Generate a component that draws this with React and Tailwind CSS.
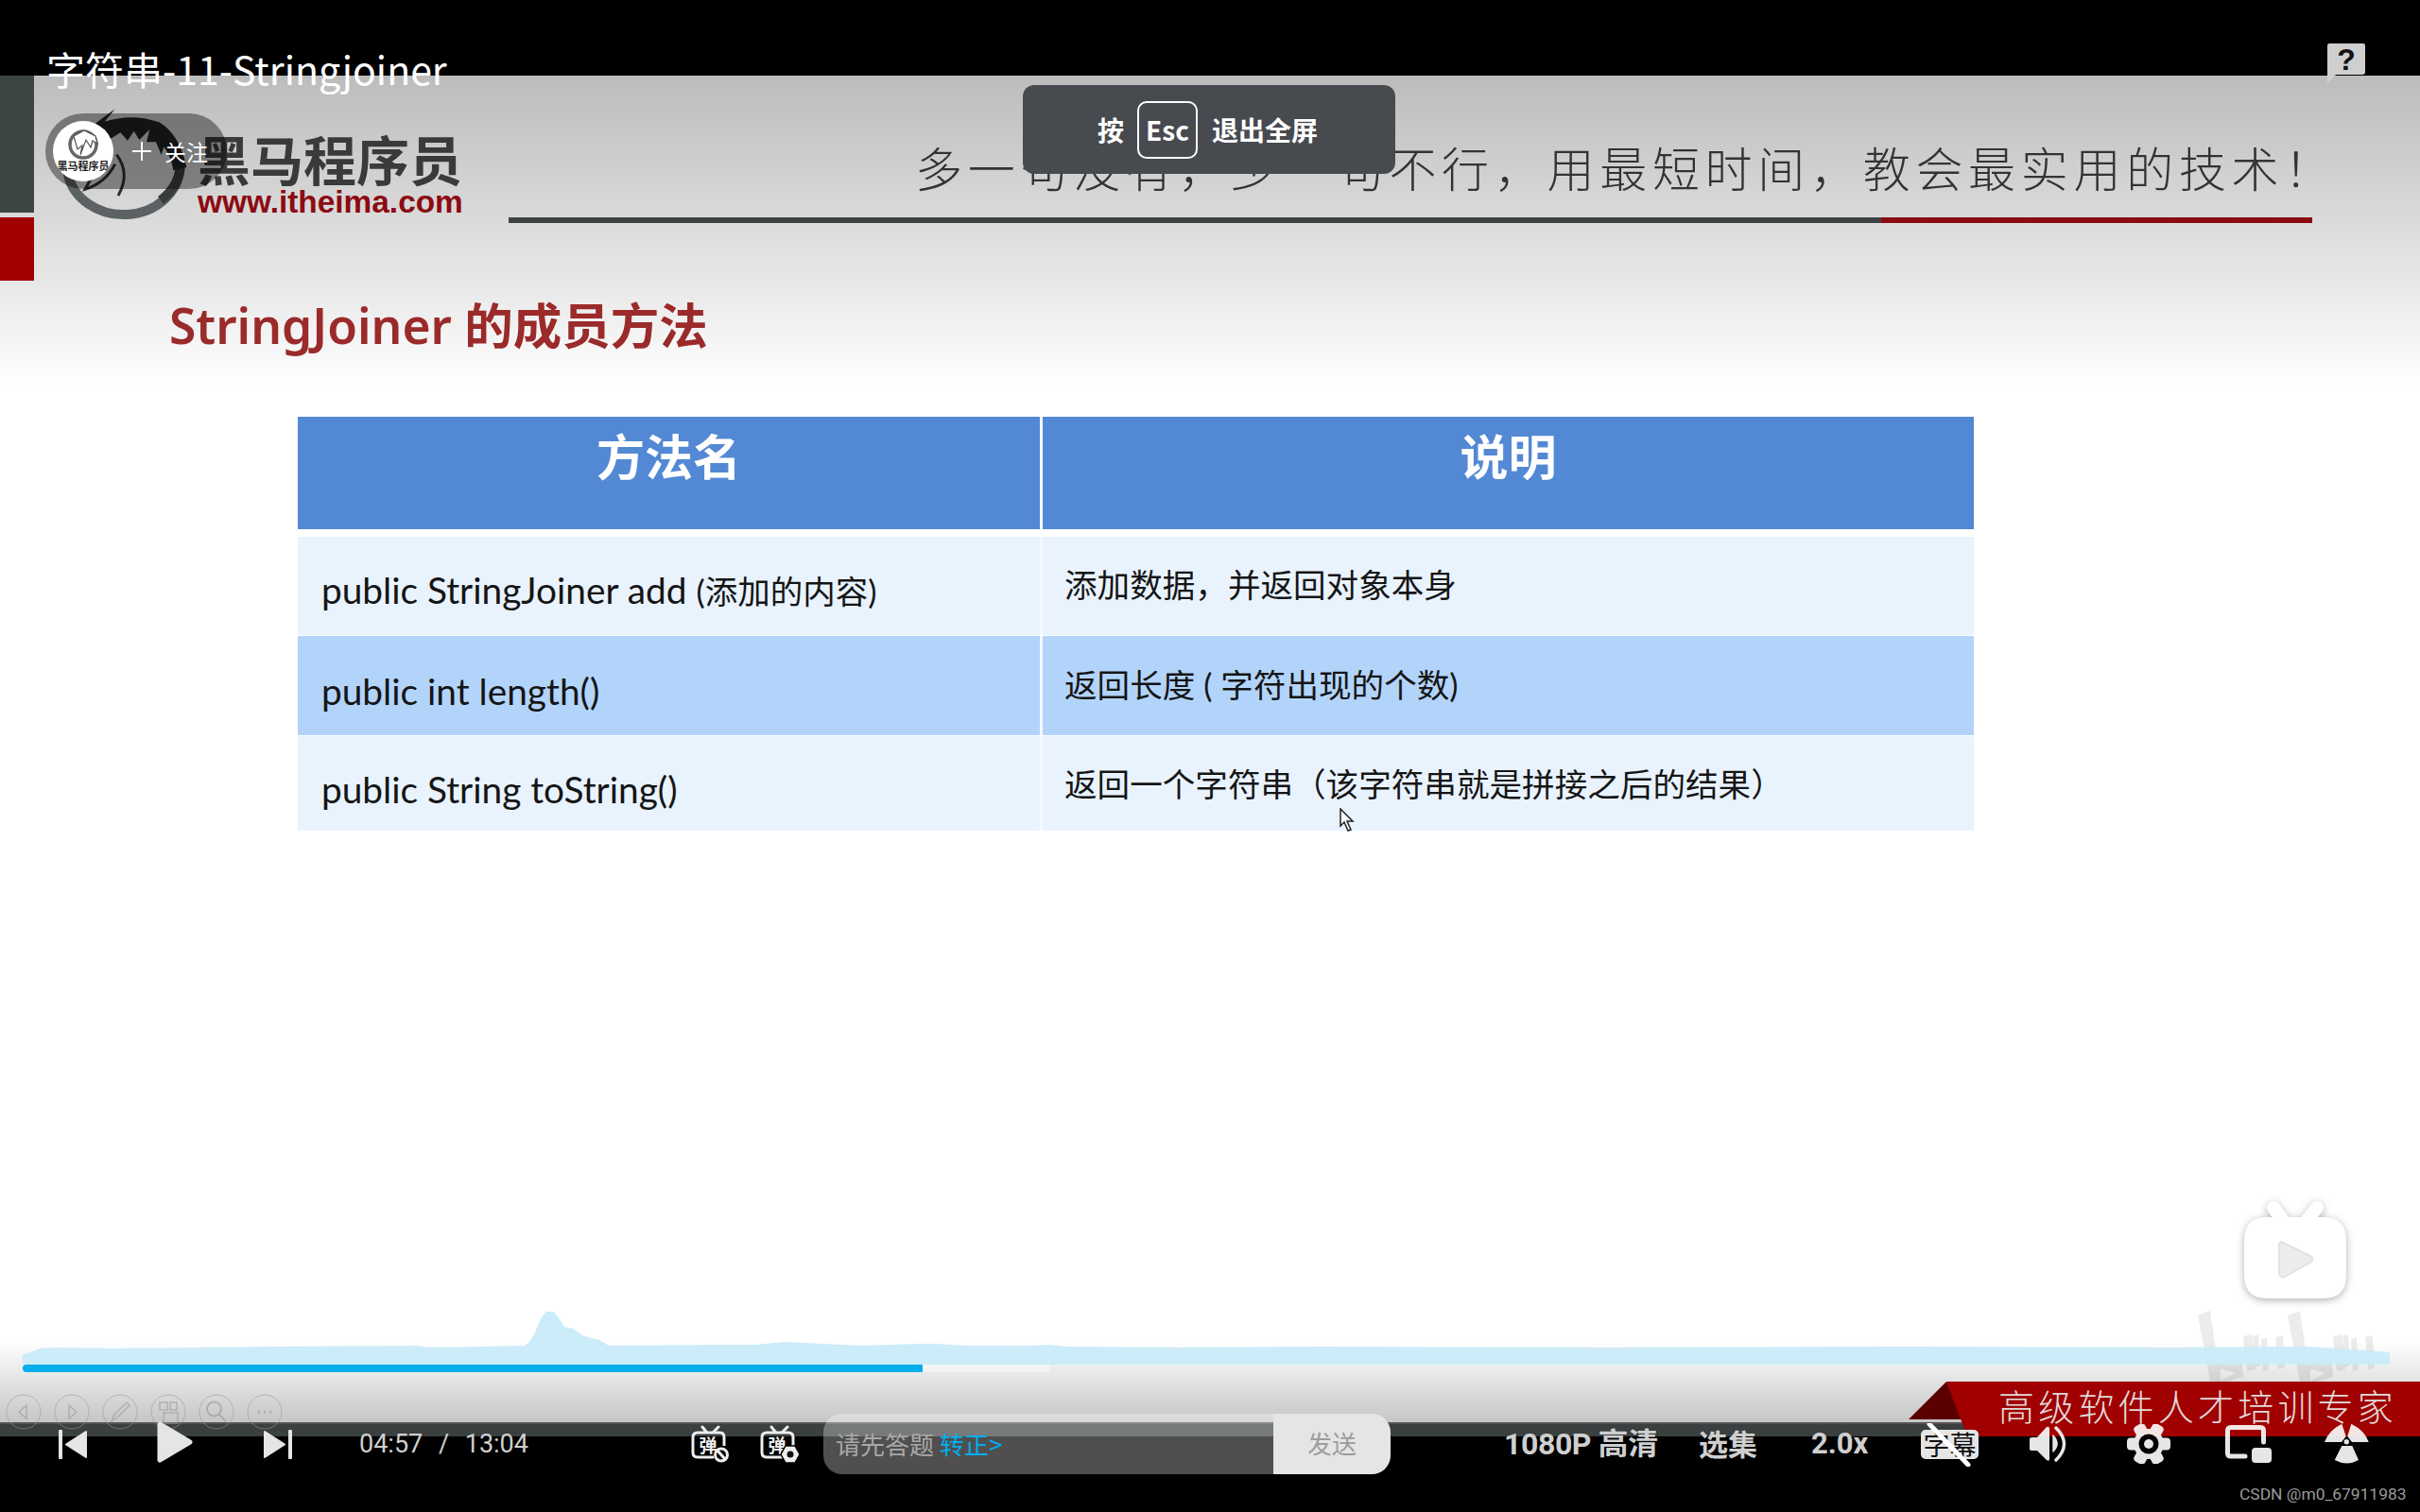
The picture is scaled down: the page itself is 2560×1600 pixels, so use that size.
import React from "react";

const rows = [
  {
    name: "public StringJoiner add ",
    nameCn: "(添加的内容)",
    desc: "添加数据，并返回对象本身",
    bg: "bg-[#e9f3fe]",
    h: "h-[104px]",
    nameTop: "pt-[31px]",
    descTop: "pt-[26px]",
  },
  {
    name: "public int length()",
    desc: "返回长度 ( 字符出现的个数)",
    bg: "bg-[#b2d4fb]",
    h: "h-[105px]",
    nameTop: "pt-[33px]",
    descTop: "pt-[27px]",
  },
  {
    name: "public String toString()",
    desc: "返回一个字符串（该字符串就是拼接之后的结果）",
    bg: "bg-[#e9f3fe]",
    h: "h-[100px]",
    nameTop: "pt-[31px]",
    descTop: "pt-[26px]",
  },
];

function BrandMark() {
  // drawn in the 3x coordinates of the logo crop
  return (
    <svg width="140" height="126" viewBox="60 20 420 378" className="shrink-0">
      <path d="M95 235 A180 158 0 0 0 452 215" fill="none" stroke="#5c6263" strokeWidth="30" />
      <path d="M452 215 A180 158 0 0 1 390 320" fill="none" stroke="#3a3d3e" strokeWidth="30" />
      <path d="M170 85 L245 30 L212 70 Q300 42 385 72 Q450 110 472 215 L430 225 Q425 185 400 150 L392 175 L375 135 L345 135 L355 95 L322 128 L305 100 L285 130 L262 105 L215 135 Z" fill="#1f2021" />
      <path d="M250 175 Q295 235 255 305" fill="none" stroke="#2f3030" strokeWidth="9" />
      <path d="M245 205 Q215 265 150 285 L175 240" fill="none" stroke="#2f3030" strokeWidth="9" />
    </svg>
  );
}

function AvatarMark() {
  return (
    <svg width="36" height="36" viewBox="0 0 36 36" className="mt-[6px]">
      <circle cx="18" cy="19" r="14" fill="none" stroke="#666" strokeWidth="3.5" />
      <path d="M8 10 L19 4 L31 10 L33 18 L28 15 L26 22 L21 14 L15 30 L17 20 L12 24 Z" fill="#fff" stroke="#555" strokeWidth="1.2" />
    </svg>
  );
}

function Stand({ d }) {
  return (
    <svg width="31" height="31" viewBox="0 0 31 31" className="shrink-0">
      <path d={d} fill="#e5e5e5" stroke="#e5e5e5" strokeWidth="2" strokeLinejoin="round" />
    </svg>
  );
}

function DanmakuIcon({ off }) {
  return (
    <svg width="42" height="40" viewBox="0 0 42 40" className="shrink-0">
      <path d="M12 2 L16 7 M29 2 L24 7" stroke="#eee" strokeWidth="3" strokeLinecap="round" />
      <path d="M24 34 H7 Q2 34 2 29 V13 Q2 8 7 8 H30 Q35 8 35 13 V22" fill="none" stroke="#eee" strokeWidth="3" />
      <text x="18" y="29" textAnchor="middle" fontSize="19" fontWeight="700" fill="#eee" className="font-['Noto_Sans_CJK_SC',sans-serif]">弹</text>
      {off ? (
        <g fill="#000" stroke="#eee" strokeWidth="3">
          <circle cx="32" cy="31.5" r="6.5" />
          <path d="M28 27 L36 36" />
        </g>
      ) : (
        <g>
          <path d="M27 22 H37 L42 31 L37 40 H27 L22 31 Z" fill="#eee" stroke="#000" strokeWidth="1.5" />
          <circle cx="32" cy="31" r="3.5" fill="#111" />
        </g>
      )}
    </svg>
  );
}

function GhostRow() {
  const stroke = "#9a9a9a";
  return (
    <div className="absolute left-[6px] top-[1475px] flex gap-[13px] opacity-60">
      {[
        <path key="a" d="M22 12 L14 19 L22 26 Z" fill="none" stroke={stroke} strokeWidth="1.5" />,
        <path key="b" d="M16 12 L24 19 L16 26 Z" fill="none" stroke={stroke} strokeWidth="1.5" />,
        <path key="c" d="M10 29 L13 22 L26 9 L29 12 L16 25 Z" fill="none" stroke={stroke} strokeWidth="1.5" />,
        <path key="d" d="M10 9 H18 V17 H10 Z M21 9 H28 V17 H21 Z M14 20 H29 V31 H14 Z" fill="none" stroke={stroke} strokeWidth="1.5" />,
        <path key="e" d="M22 22 L29 29 M24 16 A7.5 7.5 0 1 1 9 16 A7.5 7.5 0 1 1 24 16" fill="none" stroke={stroke} strokeWidth="2" />,
        <path key="f" d="M12 19 h2 M18 19 h2 M24 19 h2" fill="none" stroke={stroke} strokeWidth="3" />,
      ].map((p, i) => (
        <svg key={i} width="38" height="38" viewBox="0 0 38 38">
          <circle cx="19" cy="19" r="18" fill="none" stroke={stroke} strokeWidth="1" />
          {p}
        </svg>
      ))}
    </div>
  );
}

function BiliWatermark() {
  const group = (x) => (
    <g key={x} transform={`translate(${x} 0)`}>
      <path d="M0 5 L13 0 L21 56 L40 50 Q46 49 47 55 L48 70 L14 80 Z M24 62 L24 74 L40 66 Z" fillRule="evenodd" />
      <path d="M48 27 L57 25 L61 62 L52 64 Z M58 27 L64 25 L66 58 L60 60 Z M67 30 L73 28 L75 62 L69 64 Z M82 28 L90 26 L92 60 L85 62 Z" />
    </g>
  );
  return (
    <svg width="222" height="80" viewBox="0 0 222 80" className="absolute left-[2325px] top-[1387px] opacity-[0.07]">
      {[0, 95].map(group)}
    </svg>
  );
}

function PlayerBar() {
  return (
    <div className="absolute left-0 right-0 top-[1496px] h-[64px] flex items-center whitespace-nowrap">
      <div className="ml-[62px]">
        <Stand d="M1 1 H3 V30 H1 Z M29 2 V29 L8 15.5 Z" />
      </div>
      <svg width="38" height="44" viewBox="0 0 38 44" className="ml-[73px] -mt-[4px] shrink-0">
        <path d="M3 3 L35 22 L3 41 Z" fill="#e5e5e5" stroke="#e5e5e5" strokeWidth="5" strokeLinejoin="round" />
      </svg>
      <div className="ml-[74px]">
        <Stand d="M28 1 H30 V30 H28 Z M2 2 V29 L23 15.5 Z" />
      </div>
      <div className="ml-[71px] w-[179px] text-[27px] text-[#cfcfcf] font-['Roboto',sans-serif] flex justify-between">
        <span>04:57</span>
        <span>/</span>
        <span>13:04</span>
      </div>
      <div className="ml-[172px]">
        <DanmakuIcon off />
      </div>
      <div className="ml-[31px]">
        <DanmakuIcon />
      </div>
      <div className="ml-[25px] w-[600px] h-[64px] flex rounded-[20px] overflow-hidden bg-white/[0.31]">
        <div className="flex-1 flex items-center pl-[13px] -mt-[2px] text-[26px] text-[#a8a8a8] font-['Noto_Sans_CJK_SC',sans-serif]">
          <span>请先答题</span>
          <span className="ml-[6px] text-[#00aeec]">转正&gt;</span>
        </div>
        <div className="w-[124px] bg-[#e5e5e5] flex items-center justify-center pb-[3px] text-[26px] text-[#9c9c9c] font-['Noto_Sans_CJK_SC',sans-serif]">
          发送
        </div>
      </div>
      <div className="ml-[120px] w-[164px] text-[32px] font-bold text-[#cfcfcf] tracking-[-0.4px] font-['Roboto','Noto_Sans_CJK_SC',sans-serif]">
        1080P 高清
      </div>
      <div className="ml-[42px] w-[64px] -mt-[2px] text-[31px] font-bold text-[#cfcfcf] font-['Noto_Sans_CJK_SC',sans-serif]">
        选集
      </div>
      <div className="ml-[55px] w-[60px] text-[31px] font-bold text-[#cfcfcf] font-['Roboto',sans-serif]">
        2.0x
      </div>
      <div className="ml-[56px] relative w-[61px] h-[31px] bg-[#e5e5e5] rounded-[5px] flex items-center justify-center text-[28px] leading-none text-[#111] font-['Noto_Sans_CJK_SC',sans-serif]">
        字幕
        <svg width="61" height="46" viewBox="0 0 61 46" className="absolute left-0 -top-[7px]">
          <path d="M9 1 L50 44" stroke="#fff" strokeWidth="5" strokeLinecap="round" />
        </svg>
      </div>
      <svg width="40" height="38" viewBox="0 0 40 38" className="ml-[54px] shrink-0 opacity-90">
        <path d="M0 14 Q0 12 3 12 H8 L18 1 Q21 0 21 3 V35 Q21 38 18 36 L8 26 H3 Q0 26 0 24 Z" fill="#fff" />
        <path d="M25 10 Q33 18.5 25 27 Z" fill="#fff" stroke="#fff" strokeWidth="1.5" strokeLinejoin="round" />
        <path d="M28 2 Q45 19 28 36" fill="none" stroke="#fff" strokeWidth="3.5" strokeLinecap="round" />
      </svg>
      <svg width="46" height="42" viewBox="0 0 46 42" className="ml-[63px] shrink-0 opacity-90">
        <g fill="#fff">
          <rect x="16.5" y="-2" width="13" height="46" rx="4" transform="rotate(30 23 21)" />
          <rect x="16.5" y="-2" width="13" height="46" rx="4" transform="rotate(90 23 21)" />
          <rect x="16.5" y="-2" width="13" height="46" rx="4" transform="rotate(150 23 21)" />
          <circle cx="23" cy="21" r="16" />
        </g>
        <circle cx="23" cy="21" r="10.5" fill="#000" />
        <circle cx="23" cy="21" r="5" fill="#fff" />
      </svg>
      <svg width="49" height="40" viewBox="0 0 49 40" className="ml-[58px] shrink-0 opacity-90">
        <path d="M40.5 18 V6 Q40.5 2.5 37 2.5 H6 Q2.5 2.5 2.5 6 V30 Q2.5 33 6 33 H21" fill="none" stroke="#fff" strokeWidth="5" strokeLinecap="round" />
        <rect x="28" y="24" width="21" height="16" rx="4" fill="#fff" />
      </svg>
      <svg width="47" height="44" viewBox="0 0 47 44" className="ml-[56px] shrink-0 opacity-90">
        <g fill="#fff">
          <path d="M18.3 0.7 Q4 8 0 20 L18 20 L22.7 14 Z" />
          <path d="M28.3 0.7 Q43 8 46.7 20 L29 20 L24.3 14 Z" />
          <path d="M18.3 24 H29.3 L36 39 Q24 46 10.7 39 Z" />
          <circle cx="23.3" cy="19.7" r="2.7" />
        </g>
      </svg>
    </div>
  );
}

export default function App() {
  return (
    <div className="relative w-[2560px] h-[1600px] bg-black overflow-hidden font-['Noto_Sans','Noto_Sans_CJK_SC',sans-serif]">
      <div className="h-[80px]" />

      {/* slide */}
      <div className="h-[1440px] flex flex-col bg-white">
        <div className="h-[330px] bg-gradient-to-b from-[#bcbcbc] to-white flex">
          <div className="w-[36px] shrink-0 flex flex-col gap-[5px]">
            <div className="h-[145px] bg-[#3c4444]" />
            <div className="h-[67px] bg-[#a00000]" />
          </div>
          <div className="flex-1">
            <div className="flex items-start pt-[32px] pl-[24px]">
              <BrandMark />
              <div className="ml-[9px] mt-[30px] w-[280px] shrink-0">
                <div className="text-[56px] leading-[50px] font-bold text-[#3a3a3a] whitespace-nowrap font-['Noto_Sans_CJK_SC',sans-serif]">
                  黑马程序员
                </div>
                <div className="mt-[6px] text-[33.4px] leading-[32px] font-bold text-[#8c0a12] whitespace-nowrap font-['Liberation_Sans',sans-serif]">
                  www.itheima.com
                </div>
              </div>
              <div className="ml-[49px] w-[1908px] shrink-0">
                <div className="mt-[39px] -mr-[26px] h-[50px] text-right text-[50px] leading-[50px] tracking-[5.7px] text-[#333] whitespace-nowrap font-light font-['Noto_Sans_CJK_SC',sans-serif]">
                  多一句没有，少一句不行，用最短时间，教会最实用的技术！
                </div>
                <div className="mt-[29px] flex h-[6px]">
                  <div className="w-[1452px] bg-[#3f4242]" />
                  <div className="w-[456px] bg-[#8c0a12]" />
                </div>
              </div>
            </div>
            <div className="ml-[143px] mt-[76px] text-[51.5px] leading-[60px] font-semibold text-[#9b2a2a] whitespace-nowrap">
              StringJoiner 的成员方法
            </div>
          </div>
        </div>

        <div className="ml-[315px] mt-[31px] w-[1773px] flex flex-col">
          <div className="flex h-[119px] bg-[#5389d4] text-white text-[51px] leading-[60px] font-bold font-['Noto_Sans_CJK_SC',sans-serif]">
            <div className="w-[785px] pt-[10px] text-center">方法名</div>
            <div className="w-[3px] bg-[#f4f8fd]" />
            <div className="flex-1 pt-[10px] text-center">说明</div>
          </div>
          <div className="h-[8px]" />
          {rows.map((row) => (
            <div key={row.name} className={`flex mb-[1px] ${row.h} ${row.bg} text-[#151515]`}>
              <div className={`w-[785px] pl-[25px] text-[38.8px] leading-[50px] whitespace-nowrap font-['Lato','Noto_Sans_CJK_SC',sans-serif] ${row.nameTop}`}>
                {row.name}
                {row.nameCn && <span className="text-[34.5px]">{row.nameCn}</span>}
              </div>
              <div className="w-[3px] bg-[#f4f8fd]" />
              <div className={`flex-1 pl-[23px] text-[34.6px] leading-[50px] font-['Lato','Noto_Sans_CJK_SC',sans-serif] ${row.descTop}`}>
                {row.desc}
              </div>
            </div>
          ))}
        </div>

        <div className="mt-auto h-[85px] bg-gradient-to-b from-white to-[#c6c6c6]" />
        <div className="h-[15px] bg-[#3a3f3f] border-t-2 border-[#555]" />
      </div>

      <div className="h-[80px]" />

      {/* player overlays */}
      <svg width="17" height="26" viewBox="0 0 17 26" className="absolute left-[1417px] top-[855px]">
        <path d="M1 1 L1 19 L5 15 L9 24 L12 23 L8 14 L14 14 Z" fill="#fff" stroke="#222" strokeWidth="1.5" />
      </svg>

      <BiliWatermark />

      <svg width="108" height="104" viewBox="0 0 108 104" className="absolute left-[2374px] top-[1271px] drop-shadow-[0_2px_4px_rgba(0,0,0,0.3)]">
        <path d="M31 7 L42 22 M77 7 L65 22" stroke="#fff" strokeWidth="14" strokeLinecap="round" />
        <path d="M24 17 H84 Q108 17 108 42 V78 Q108 103 84 103 H24 Q0 103 0 78 V42 Q0 17 24 17 Z" fill="#fff" />
        <path d="M41 44 Q38 42 37 46 V76 Q38 82 43 80 L70 65 Q75 61 70 58 Z" fill="#ececec" stroke="#e2e2e2" strokeWidth="2" strokeLinejoin="round" />
      </svg>

      <svg width="2560" height="64" viewBox="0 1380 2560 64" className="absolute left-0 top-[1380px]">
        <path
          d="M24 1444 V1433 L30 1432 L42 1427 L60 1426 L120 1427 L290 1425 L440 1424 L455 1426 L510 1425 L555 1424 L560 1420 L566 1410 L572 1395 L578 1388 L586 1388 L592 1396 L597 1404 L606 1406 L616 1413 L626 1416 L634 1418 L644 1424 L770 1423 L800 1423 L830 1420 L870 1422 L910 1424 L975 1422 L990 1422 L1020 1424 L1090 1424 L1110 1423 L1130 1425 L1250 1426 L1400 1425 L1700 1426 L2000 1425 L2300 1426 L2440 1425 L2500 1429 L2528 1431 V1444 Z"
          fill="#c9ebf9"
          fillOpacity="0.95"
        />
      </svg>
      <div className="absolute left-[24px] top-[1444px] w-[952px] h-[8px] bg-[#00aeec] rounded-l-[4px]" />
      <div className="absolute left-[976px] top-[1444px] w-[134px] h-[8px] bg-white/40" />

      <GhostRow />

      {/* red ribbon in the slide */}
      <svg width="541" height="58" viewBox="0 0 541 58" className="absolute left-[2019px] top-[1462px]">
        <path d="M0 40 L40 0 L58 40 Z" fill="#5a0000" />
        <path d="M40 0 H541 V58 H62 Z" fill="#a00000" />
      </svg>
      <div className="absolute left-[2114px] top-[1462px] h-[50px] text-[38px] leading-[50px] tracking-[4.2px] text-[#e2dada] whitespace-nowrap font-light font-['Noto_Sans_CJK_SC',sans-serif]">
        高级软件人才培训专家
      </div>

      <PlayerBar />

      <div className="absolute left-[2369px] top-[1570px] text-[17.4px] leading-[22px] text-[#9a9a9a] font-['Roboto',sans-serif] whitespace-nowrap">
        CSDN @m0_67911983
      </div>

      {/* top chrome */}
      <div className="absolute left-[49px] top-[44px] text-[41px] leading-[56px] text-white whitespace-nowrap font-['Noto_Sans_CJK_SC',sans-serif]">
        字符串-11-Stringjoiner
      </div>

      <svg width="42" height="42" viewBox="0 0 42 42" className="absolute left-[2461px] top-[46px]">
        <path d="M3 0 H39 Q41 0 41 3 V30 Q41 33 38 33 H10 L1 42 V3 Q1 0 3 0 Z" fill="#cfcfcf" />
        <text x="21" y="28" textAnchor="middle" fontSize="32" fontWeight="700" fill="#111" className="font-['Liberation_Sans',sans-serif]">?</text>
      </svg>

      <div className="absolute left-[48px] top-[120px] w-[192px] h-[80px] rounded-full bg-black/40 flex items-center pl-[8px] text-white whitespace-nowrap">
        <div className="w-[64px] h-[64px] rounded-full bg-white flex flex-col items-center overflow-hidden">
          <AvatarMark />
          <div className="text-[11px] leading-[11px] font-bold text-[#222] font-['Noto_Sans_CJK_SC',sans-serif]">黑马程序员</div>
        </div>
        <svg width="20" height="20" viewBox="0 0 20 20" className="ml-[20px]">
          <path d="M10 0 V20 M0 10 H20" stroke="#fff" strokeWidth="2" />
        </svg>
        <span className="ml-[14px] text-[23px] leading-none font-['Noto_Sans_CJK_SC',sans-serif]">关注</span>
      </div>

      <div className="absolute left-[1082px] top-[90px] w-[394px] h-[94px] rounded-[12px] bg-[#474a4f] flex items-center pl-[79px] text-[28px] font-bold text-white whitespace-nowrap font-['Noto_Sans_CJK_SC',sans-serif]">
        <span>按</span>
        <span className="ml-[14px] w-[64px] h-[61px] rounded-[10px] border-2 border-white flex items-center justify-center">Esc</span>
        <span className="ml-[15px]">退出全屏</span>
      </div>
    </div>
  );
}
